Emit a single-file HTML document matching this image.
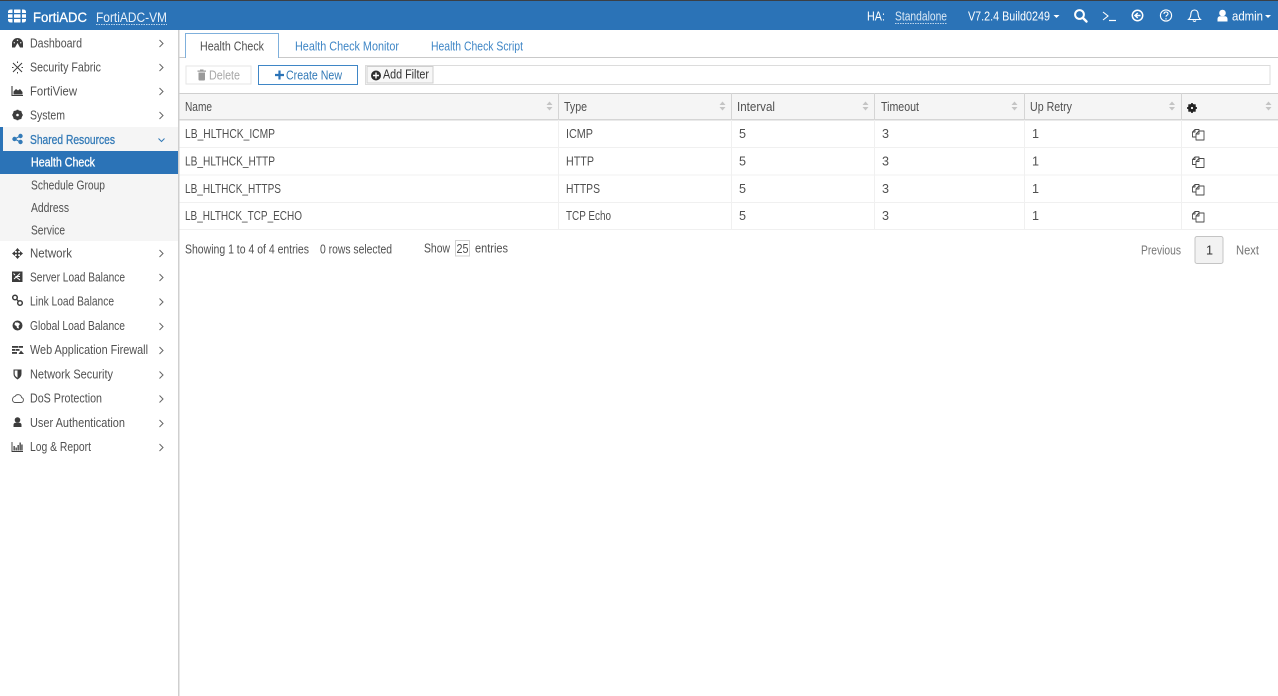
<!DOCTYPE html>
<html lang="en">
<head>
<meta charset="utf-8">
<title>FortiADC</title>
<style>
html,body{margin:0;padding:0;background:#fff;width:1278px;height:696px;overflow:hidden}
svg{display:block;filter:blur(.25px)}
text{font-family:"Liberation Sans",sans-serif;font-size:12.6px;fill:#505050}
.w{fill:#fff}
.b{fill:#337ab7}
.g{fill:#a8a8a8}
.ic{fill:#3c3c3c}
.st{fill:none;stroke:#3c3c3c;stroke-width:1.1}
.wst{fill:none;stroke:#fff;stroke-width:1.5}
.chev{fill:none;stroke:#666;stroke-width:1}
.sort{fill:#c4c4c4}
</style>
</head>
<body>
<svg width="1278" height="696" viewBox="0 0 1278 696" xmlns="http://www.w3.org/2000/svg">
<defs>
<path id="chev" class="chev" d="M-1.500-3.500 2 0-1.500 3.500"/>
<g id="sort"><path class="sort" d="M-3-1 0-4.500 3-1zM-3 1 0 4.500 3 1z"/></g>
<g id="clone" fill="none" stroke="#4a4a4a" stroke-width=".9" stroke-linejoin="round">
<path d="M1-3.500V-5H-3L-5.500-2.500V2.500H-2"/>
<path d="M-5.500-2.500H-3V-5"/>
<path d="M-2-.5 1-3.500H6V5.500H-2z" fill="#fff"/>
<path d="M1-3.500V-.5H-2"/>
</g>
</defs>

<!-- header -->
<rect width="1278" height="30" fill="#2b73b7"/>
<rect width="1278" height="1" fill="#3b3f45"/>
<g fill="#fff">
<rect x="14" y="9.500" width="6.500" height="3.500" rx=".5"/>
<rect x="14" y="14.300" width="6.500" height="3.500" rx=".5"/>
<rect x="14" y="19" width="6.500" height="3.500" rx=".5"/>
<path d="M8 13V12q0-2.500 3-2.500h1.500V13zM8 14.300h4.500v3.500H8zM8 19h4.500v3.500H11q-3 0-3-2.500zM22 9.500H23q3 0 3 2.500v1h-4zM22 14.300H26v3.500h-4zM22 19H26v1q0 2.500-3 2.500h-1z"/>
</g>
<text class="w" x="33" y="22" textLength="54" lengthAdjust="spacingAndGlyphs" style="font-size:13.5px;stroke:#fff;stroke-width:.3">FortiADC</text>
<text class="w" x="96" y="22" textLength="71" lengthAdjust="spacingAndGlyphs" style="font-size:13.5px;fill:#eaf2fa">FortiADC-VM</text>
<path d="M96 24.500H167" stroke="#bcd5ec" stroke-width="1" stroke-dasharray="1.500 1"/>

<text class="w" x="867" y="20.500" textLength="18" lengthAdjust="spacingAndGlyphs">HA:</text>
<text x="895" y="20.500" textLength="52" lengthAdjust="spacingAndGlyphs" style="fill:#dbe9f6">Standalone</text>
<path d="M895 23.500H947" stroke="#bcd5ec" stroke-width="1" stroke-dasharray="1.500 1"/>
<text class="w" x="968" y="20.500" textLength="82" lengthAdjust="spacingAndGlyphs">V7.2.4 Build0249</text>
<path d="M1053.500 15h6l-3 3z" fill="#fff"/>
<circle cx="1079.500" cy="14.500" r="4.400" fill="none" stroke="#fff" stroke-width="2"/>
<path d="M1083 18 1086.500 21.500" stroke="#fff" stroke-width="2.400" stroke-linecap="round"/>
<path d="M1103 12 1108 16 1103 20" fill="none" stroke="#fff" stroke-width="1.100"/>
<path d="M1109 20.500H1116" stroke="#fff" stroke-width="1.200"/>
<circle cx="1137.500" cy="15.500" r="5.200" class="wst"/>
<path d="M1140.500 15.500H1136M1137.800 13 1135 15.500 1137.800 18" fill="none" stroke="#fff" stroke-width="1.500"/>
<circle cx="1166" cy="15.500" r="5.600" fill="none" stroke="#fff" stroke-width="1.100"/>
<path d="M1164 14q0-2 2-2t2 1.800q0 1-1.200 1.600-.8.500-.8 1.300" fill="none" stroke="#fff" stroke-width="1.100"/>
<circle cx="1166" cy="18.900" r=".7" fill="#fff"/>
<path d="M1194.500 10q3.500 0 3.700 4.500 .1 3 2.300 5h-12q2.200-2 2.300-5 .2-4.500 3.700-4.500z" fill="none" stroke="#fff" stroke-width="1.100"/>
<path d="M1193 20.500q1.500 2 3 0" fill="none" stroke="#fff" stroke-width="1.100"/>
<circle cx="1222.500" cy="13" r="3.300" fill="#fff"/>
<path d="M1217.500 21.500v-2.500q0-2.800 2.800-2.800h4.400q2.800 0 2.800 2.800v2.500z" fill="#fff"/>
<text class="w" x="1232" y="20.500" textLength="31" lengthAdjust="spacingAndGlyphs">admin</text>
<path d="M1265 15h6l-3 3z" fill="#fff"/>

<!-- sidebar -->
<rect x="178" y="30" width="1.500" height="666" fill="#cfcfcf"/>
<rect x="0" y="127" width="178" height="114" fill="#f5f5f5"/>
<rect x="0" y="127" width="3" height="24" fill="#2b73b7"/>
<rect x="0" y="151" width="178" height="23" fill="#2b73b7"/>

<g>
<text x="30" y="47.500" textLength="52" lengthAdjust="spacingAndGlyphs">Dashboard</text>
<text x="30" y="71.500" textLength="71" lengthAdjust="spacingAndGlyphs">Security Fabric</text>
<text x="30" y="95.500" textLength="47" lengthAdjust="spacingAndGlyphs">FortiView</text>
<text x="30" y="119.500" textLength="35" lengthAdjust="spacingAndGlyphs">System</text>
<text class="b" x="30" y="144" textLength="85" lengthAdjust="spacingAndGlyphs" style="stroke:#337ab7;stroke-width:.3">Shared Resources</text>
<text class="w" x="31" y="166.500" textLength="64" lengthAdjust="spacingAndGlyphs" style="stroke:#fff;stroke-width:.3">Health Check</text>
<text x="31" y="189.500" textLength="74" lengthAdjust="spacingAndGlyphs">Schedule Group</text>
<text x="31" y="212" textLength="38" lengthAdjust="spacingAndGlyphs">Address</text>
<text x="31" y="234.500" textLength="34" lengthAdjust="spacingAndGlyphs">Service</text>
<text x="30" y="257.500" textLength="42" lengthAdjust="spacingAndGlyphs">Network</text>
<text x="30" y="281.500" textLength="95" lengthAdjust="spacingAndGlyphs">Server Load Balance</text>
<text x="30" y="305.500" textLength="84" lengthAdjust="spacingAndGlyphs">Link Load Balance</text>
<text x="30" y="330" textLength="95" lengthAdjust="spacingAndGlyphs">Global Load Balance</text>
<text x="30" y="354" textLength="118" lengthAdjust="spacingAndGlyphs">Web Application Firewall</text>
<text x="30" y="378.500" textLength="83" lengthAdjust="spacingAndGlyphs">Network Security</text>
<text x="30" y="402.500" textLength="72" lengthAdjust="spacingAndGlyphs">DoS Protection</text>
<text x="30" y="427" textLength="95" lengthAdjust="spacingAndGlyphs">User Authentication</text>
<text x="30" y="451" textLength="61" lengthAdjust="spacingAndGlyphs">Log &amp; Report</text>
</g>

<use href="#chev" x="161" y="43.500"/>
<use href="#chev" x="161" y="67.500"/>
<use href="#chev" x="161" y="91.500"/>
<use href="#chev" x="161" y="115.500"/>
<path d="M158.500 138.500 161.500 141.500 164.500 138.500" fill="none" stroke="#337ab7" stroke-width="1"/>
<use href="#chev" x="161" y="253.500"/>
<use href="#chev" x="161" y="277.500"/>
<use href="#chev" x="161" y="302"/>
<use href="#chev" x="161" y="326.500"/>
<use href="#chev" x="161" y="350.500"/>
<use href="#chev" x="161" y="375"/>
<use href="#chev" x="161" y="399"/>
<use href="#chev" x="161" y="423.500"/>
<use href="#chev" x="161" y="447.500"/>

<!-- sidebar icons -->
<path class="ic" d="M12 47.500v-4a5.500 5.500 0 0 1 11 0v4z"/>
<path d="M15 47.500 17.500 43 20 47.500z" fill="#fff"/><circle cx="17.500" cy="40.300" r=".7" fill="#fff"/><circle cx="14.300" cy="42.800" r=".7" fill="#fff"/><circle cx="20.700" cy="42.800" r=".7" fill="#fff"/>
<g stroke="#3c3c3c" stroke-width="1" fill="none"><path d="M13 63 22 72M22 63 13 72M17.500 61.500v1.500M17.500 72v1.500M12 67.500h1.500M21.500 67.500H23"/></g>
<path class="st" d="M12 86v9.500h11"/>
<path class="ic" d="M13.500 94.500v-3l2.500-2.500 2 1.500 2-1.500 2.500 3v2.500z"/>
<circle cx="17.500" cy="115" r="3.600" fill="none" stroke="#3c3c3c" stroke-width="2.600"/>
<path d="M17.500 109.800v10.400M12.300 115h10.400M13.800 111.300l7.400 7.400M21.200 111.300l-7.400 7.400" stroke="#3c3c3c" stroke-width="1.800"/>
<circle cx="17.500" cy="115" r="1.300" fill="#fff"/>
<g fill="#337ab7"><circle cx="14.500" cy="139" r="2.200"/><circle cx="20.500" cy="136" r="2.200"/><circle cx="20.500" cy="142" r="2.200"/><path d="M14.500 139 20.500 136M14.500 139 20.500 142" stroke="#337ab7" stroke-width="1.200"/></g>
<g class="ic"><path d="M17.500 248 20 251h-5zM17.500 259 15 256h5zM12 253.500 15 251v5zM23 253.500 20 251v5z"/><path d="M17.500 250v7M14 253.500h7" stroke="#3c3c3c" stroke-width="1.400"/></g>
<rect x="12" y="271.500" width="10.500" height="10.500" class="ic"/>
<path d="M14 279 20 273.500M15.500 276.500 20 276.500M15.500 276.500 20 280M13.500 273.500 15 275" stroke="#fff" stroke-width="1" fill="none"/>
<circle cx="15" cy="297.500" r="2.300" class="st" style="stroke-width:1.500"/>
<circle cx="20" cy="303" r="2.300" class="st" style="stroke-width:1.500"/>
<path d="M16.500 299 18.500 301.500" stroke="#3c3c3c" stroke-width="1.400"/>
<circle cx="17.500" cy="325.500" r="5" class="ic"/>
<path d="M15 322.500h3l2 1.500-1.500 2 .5 2.500-2-.5-.5-2-2-1z" fill="#fff"/>
<g class="ic"><rect x="12" y="346" width="6.500" height="1.800"/><rect x="19" y="346" width="4" height="1.800"/><rect x="12" y="349" width="3" height="1.800"/><rect x="15.500" y="349" width="4" height="1.800"/><rect x="12" y="352" width="5" height="1.800"/><path d="M18.500 354l2.500-3.500 3 3.500z"/></g>
<path class="ic" d="M13.500 369.500h8v4.500q0 3-4 5.500-4-2.500-4-5.500z"/>
<path d="M17.500 370.500v7.300q-2.800-1.800-2.800-3.800v-3.500z" fill="#fff"/>
<path class="st" d="M14.500 402.500h6.500a2.500 2.500 0 0 0 .6-4.900 3.500 3.500 0 0 0-6.500-1.200 3.200 3.200 0 0 0-.6 6.100z" style="stroke:#555;stroke-width:.9"/>
<circle cx="17.500" cy="420" r="2.800" class="ic"/>
<path class="ic" d="M13.500 427v-2q0-2.300 2.300-2.300h3.400q2.300 0 2.300 2.300v2z"/>
<path class="st" d="M12 442v9.500h11" style="stroke-width:.9"/>
<g class="ic"><rect x="13.500" y="446" width="1.300" height="4.500"/><rect x="15.500" y="447.500" width="1.300" height="3"/><rect x="17.500" y="445" width="1.300" height="5.500"/><rect x="19.500" y="442.500" width="1.300" height="8"/><rect x="21.300" y="444.500" width="1.300" height="6"/></g>

<!-- tabs -->
<rect x="179.500" y="57" width="1098.500" height="1" fill="#c9c9c9"/>
<path d="M185.500 58V33.500H278.500V58" fill="#fff" stroke="#7fb0dc" stroke-width="1"/>
<text x="200" y="50.500" textLength="64" lengthAdjust="spacingAndGlyphs">Health Check</text>
<text x="295" y="50.500" textLength="104" lengthAdjust="spacingAndGlyphs" style="fill:#3f86c6">Health Check Monitor</text>
<text x="431" y="50.500" textLength="92" lengthAdjust="spacingAndGlyphs" style="fill:#3f86c6">Health Check Script</text>

<!-- toolbar -->
<rect x="186" y="66" width="65" height="18" fill="#fff" stroke="#e6e6e6"/>
<path d="M198.500 72.500h6.500v7q0 1-1 1h-4.500q-1 0-1-1zM197.500 70.500h8.500v1.200h-8.500zM200 69.500h3.500v1h-3.500z" fill="#9a9a9a"/>
<text class="g" x="209" y="79.500" textLength="31" lengthAdjust="spacingAndGlyphs">Delete</text>
<rect x="258.500" y="65.500" width="99" height="19" fill="#fff" stroke="#3f86c6"/>
<path d="M275 75h9M279.500 70.500v9" stroke="#2b73b7" stroke-width="2.200"/>
<text class="b" x="286" y="79.500" textLength="56" lengthAdjust="spacingAndGlyphs">Create New</text>
<rect x="365.500" y="65.500" width="904.500" height="19" fill="#fff" stroke="#dcdcdc"/>
<rect x="367" y="66.500" width="66" height="16.500" fill="#f7f7f7" stroke="#cfcfcf"/>
<circle cx="376" cy="75.500" r="5" fill="#2d2d2d"/>
<path d="M373 75.500h6M376 72.500v6" stroke="#fff" stroke-width="1.400"/>
<text x="383" y="78.500" textLength="46" lengthAdjust="spacingAndGlyphs" style="fill:#333">Add Filter</text>

<!-- table -->
<rect x="179.500" y="93" width="1098.500" height="27" fill="#f5f5f5"/>
<rect x="179.500" y="93" width="1098.500" height="1" fill="#cfcfcf"/>
<rect x="179.500" y="119" width="1098.500" height="1.500" fill="#d5d5d5"/>
<g fill="#d5d5d5">
<rect x="558" y="93" width="1" height="27"/><rect x="731" y="93" width="1" height="27"/><rect x="874" y="93" width="1" height="27"/><rect x="1024" y="93" width="1" height="27"/><rect x="1181" y="93" width="1" height="27"/>
</g>
<g fill="#f0f0f0">
<rect x="558" y="120" width="1" height="109"/><rect x="731" y="120" width="1" height="109"/><rect x="874" y="120" width="1" height="109"/><rect x="1024" y="120" width="1" height="109"/><rect x="1181" y="120" width="1" height="109"/>
<rect x="179.500" y="147" width="1098.500" height="1"/><rect x="179.500" y="174.500" width="1098.500" height="1"/><rect x="179.500" y="202" width="1098.500" height="1"/><rect x="179.500" y="229" width="1098.500" height="1"/>
</g>
<text x="185" y="111" textLength="27" lengthAdjust="spacingAndGlyphs">Name</text>
<text x="564" y="111" textLength="23" lengthAdjust="spacingAndGlyphs">Type</text>
<text x="737" y="111" textLength="38" lengthAdjust="spacingAndGlyphs">Interval</text>
<text x="881" y="111" textLength="38" lengthAdjust="spacingAndGlyphs">Timeout</text>
<text x="1030" y="111" textLength="42" lengthAdjust="spacingAndGlyphs">Up Retry</text>
<use href="#sort" x="549.500" y="106"/>
<use href="#sort" x="722.500" y="106"/>
<use href="#sort" x="865.500" y="106"/>
<use href="#sort" x="1014.500" y="106"/>
<use href="#sort" x="1172" y="106"/>
<use href="#sort" x="1268.500" y="106"/>
<circle cx="1192" cy="108" r="2.900" fill="none" stroke="#222" stroke-width="2.400"/>
<path d="M1192 103v10M1187 108h10M1188.500 104.500l7 7M1195.500 104.500l-7 7" stroke="#222" stroke-width="1.700"/>
<circle cx="1192" cy="108" r="1.100" fill="#fff"/>

<text x="185" y="138" textLength="90" lengthAdjust="spacingAndGlyphs">LB_HLTHCK_ICMP</text>
<text x="566" y="138" textLength="27" lengthAdjust="spacingAndGlyphs">ICMP</text>
<text x="739" y="138" textLength="6">5</text>
<text x="882" y="138" textLength="6">3</text>
<text x="1032" y="138" textLength="6">1</text>
<use href="#clone" x="1198" y="134.500"/>

<text x="185" y="165.500" textLength="90" lengthAdjust="spacingAndGlyphs">LB_HLTHCK_HTTP</text>
<text x="566" y="165.500" textLength="28" lengthAdjust="spacingAndGlyphs">HTTP</text>
<text x="739" y="165.500" textLength="6">5</text>
<text x="882" y="165.500" textLength="6">3</text>
<text x="1032" y="165.500" textLength="6">1</text>
<use href="#clone" x="1198" y="162"/>

<text x="185" y="193" textLength="96" lengthAdjust="spacingAndGlyphs">LB_HLTHCK_HTTPS</text>
<text x="566" y="193" textLength="34" lengthAdjust="spacingAndGlyphs">HTTPS</text>
<text x="739" y="193" textLength="6">5</text>
<text x="882" y="193" textLength="6">3</text>
<text x="1032" y="193" textLength="6">1</text>
<use href="#clone" x="1198" y="189.500"/>

<text x="185" y="220" textLength="117" lengthAdjust="spacingAndGlyphs">LB_HLTHCK_TCP_ECHO</text>
<text x="566" y="220" textLength="45" lengthAdjust="spacingAndGlyphs">TCP Echo</text>
<text x="739" y="220" textLength="6">5</text>
<text x="882" y="220" textLength="6">3</text>
<text x="1032" y="220" textLength="6">1</text>
<use href="#clone" x="1198" y="216.500"/>

<!-- footer -->
<text x="185" y="253.500" textLength="124" lengthAdjust="spacingAndGlyphs">Showing 1 to 4 of 4 entries</text>
<text x="320" y="253.500" textLength="72" lengthAdjust="spacingAndGlyphs">0 rows selected</text>
<text x="424" y="252.500" textLength="26" lengthAdjust="spacingAndGlyphs">Show</text>
<rect x="455.500" y="240.500" width="14" height="15.500" fill="#fff" stroke="#d0d0d0"/>
<text x="456.500" y="253" textLength="12" lengthAdjust="spacingAndGlyphs">25</text>
<text x="475" y="252.500" textLength="33" lengthAdjust="spacingAndGlyphs">entries</text>
<text x="1141" y="254.500" textLength="40" lengthAdjust="spacingAndGlyphs" style="fill:#777">Previous</text>
<rect x="1195" y="236.500" width="28" height="27" rx="2" fill="#f2f2f2" stroke="#c4c4c4"/>
<text x="1206" y="254.500" textLength="6" style="fill:#333">1</text>
<text x="1236" y="254.500" textLength="23" lengthAdjust="spacingAndGlyphs" style="fill:#777">Next</text>
</svg>
</body>
</html>
